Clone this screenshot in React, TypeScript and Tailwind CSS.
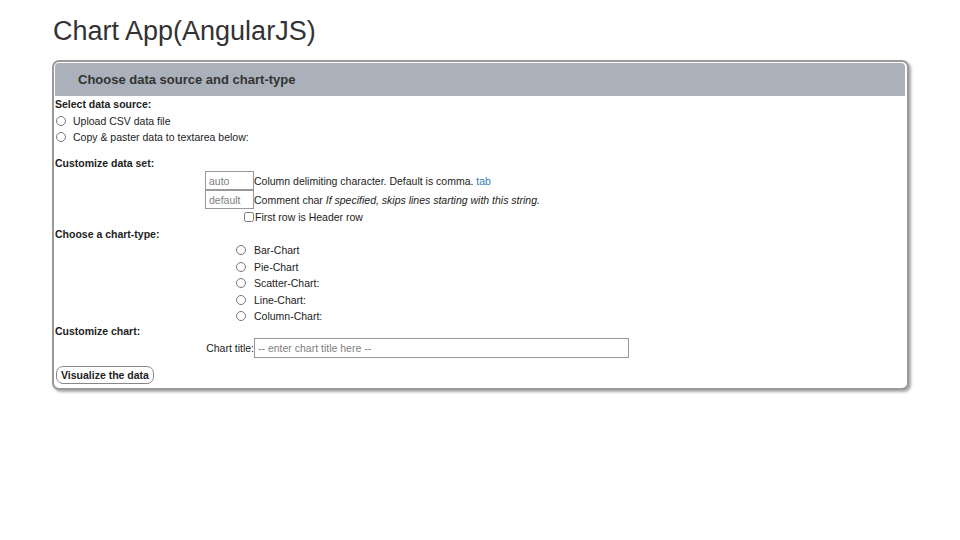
import React from 'react'

const font = { fontFamily: '"Liberation Sans", Arial, sans-serif' }

const SourceRadio = ({ label }: { label: string }) => (
    <label className='flex h-[16.5px] items-center'>
        <input type='radio' name='source' className='m-0 ml-[1px] mr-[7px] h-[10px] w-[10px]' />
        <span>{label}</span>
    </label>
)

const ChartRadio = ({ label }: { label: string }) => (
    <label className='flex h-[16.5px] items-center'>
        <div className='flex w-[199px] justify-end pr-[8px]'>
            <input type='radio' name='chart' className='m-0 h-[10px] w-[10px]' />
        </div>
        <span>{label}</span>
    </label>
)

export default function App() {
    const charts = ['Bar-Chart', 'Pie-Chart', 'Scatter-Chart:', 'Line-Chart:', 'Column-Chart:']

    return (
        <div className='min-h-[540px] bg-white text-[#222]' style={font}>
            <h1 className='ml-[53px] pt-[16px] text-[27px] leading-[31px] font-normal text-[#333]'>Chart App(AngularJS)</h1>

            <div className='ml-[52px] mt-[13px] w-[857px] rounded-[7px] border-2 border-[#9a9a9a] bg-white p-[1px] pr-[2px] shadow-[2px_2px_3px_rgba(0,0,0,0.35)]'>
                <div className='flex h-[33px] items-center rounded-t-[4px] bg-[#aab1ba] pl-[23px] text-[13px] font-bold text-[#333]'>
                    Choose data source and chart-type
                </div>

                <div className='text-[10.5px] leading-[12px]'>
                    <div className='flex h-[16.5px] items-center font-bold'>Select data source:</div>
                    <SourceRadio label='Upload CSV data file' />
                    <SourceRadio label='Copy & paster data to textarea below:' />

                    <div className='mt-[9px] flex h-[16.5px] items-center font-bold'>Customize data set:</div>
                    <div className='flex items-center'>
                        <input
                            placeholder='auto'
                            className='ml-[150px] h-[19px] w-[49px] border border-[#999] px-[3px] text-[10.5px] placeholder:text-[#808080]'
                        />
                        <span>Column delimiting character. Default is comma. <a className='text-[#337ab7]'>tab</a></span>
                    </div>
                    <div className='flex items-center'>
                        <input
                            placeholder='default'
                            className='ml-[150px] h-[19px] w-[49px] border border-[#999] px-[3px] text-[10.5px] placeholder:text-[#808080]'
                        />
                        <span>Comment char <i>If specified, skips lines starting with this string.</i></span>
                    </div>
                    <label className='flex h-[16.5px] items-center'>
                        <div className='flex w-[199px] justify-end'>
                            <input type='checkbox' className='m-0 h-[10px] w-[10px]' />
                        </div>
                        <span className='ml-[1px]'>First row is Header row</span>
                    </label>

                    <div className='flex h-[16.5px] items-center font-bold'>Choose a chart-type:</div>
                    {charts.map((c) => (
                        <ChartRadio key={c} label={c} />
                    ))}

                    <div className='flex h-[12.5px] items-center font-bold'>Customize chart:</div>
                    <div className='mt-[1px] flex items-center'>
                        <div className='w-[199px] text-right'>Chart title:</div>
                        <input
                            placeholder='-- enter chart title here --'
                            className='h-[20px] w-[375px] border border-[#999] px-[3px] text-[10.5px] placeholder:text-[#808080]'
                        />
                    </div>

                    <div className='mb-[3px] mt-[8px] flex'>
                        <button className='ml-[1px] h-[18px] rounded-[7px] border border-[#888] bg-white px-[4px] text-[10.5px] font-bold text-[#222]'>
                            Visualize the data
                        </button>
                    </div>
                </div>
            </div>
        </div>
    )
}
